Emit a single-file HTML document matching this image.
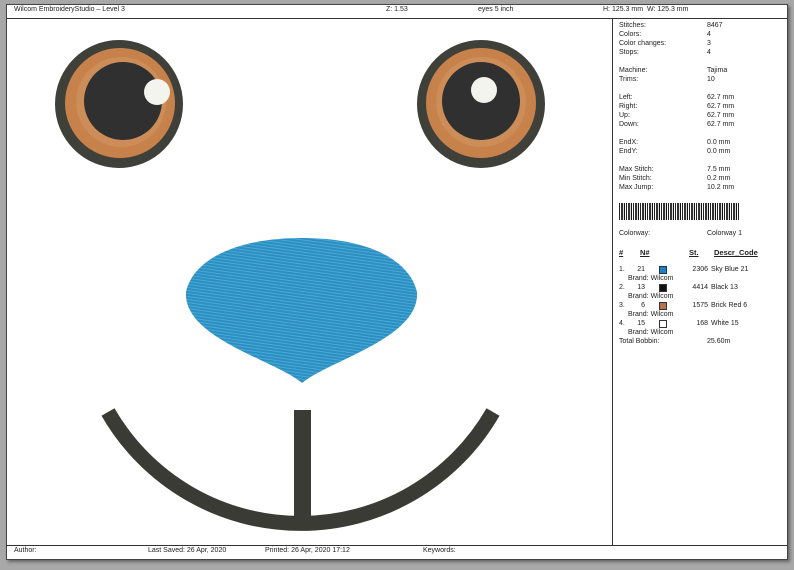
<!DOCTYPE html>
<html><head><meta charset="utf-8"><style>
*{margin:0;padding:0}
body{width:794px;height:570px;background:#a8a8a8;position:relative;overflow:hidden;font-family:"Liberation Sans",sans-serif;font-size:7px;color:#222}
.page{position:absolute;left:6px;top:4px;width:780px;height:554px;background:#fff;border:1px solid #444;box-shadow:2px 2px 3px #666}
.t{position:absolute;white-space:nowrap;line-height:8px}
.hl{position:absolute;background:#333}
.sw{position:absolute;left:659px;width:6px;height:6px;border:1px solid #333}
.r{text-align:right}
</style></head><body>
<div class="page"></div>
<div class="hl" style="left:6px;top:18px;width:781px;height:1px"></div>
<div class="hl" style="left:612px;top:18px;width:1px;height:527px"></div>
<div class="hl" style="left:6px;top:545px;width:781px;height:1px"></div>
<div class="t" style="left:14px;top:6px">Wilcom EmbroideryStudio – Level 3</div>
<div class="t" style="left:386px;top:6px">Z: 1.53</div>
<div class="t" style="left:478px;top:6px">eyes 5 inch</div>
<div class="t" style="left:603px;top:6px">H: 125.3 mm &nbsp;W: 125.3 mm</div>
<div class="t" style="left:14px;top:547px">Author:</div>
<div class="t" style="left:148px;top:547px">Last Saved: 26 Apr, 2020</div>
<div class="t" style="left:265px;top:547px">Printed: 26 Apr, 2020 17:12</div>
<div class="t" style="left:423px;top:547px">Keywords:</div>

<div class="t" style="left:619px;top:21px;line-height:9px">Stitches:<br>Colors:<br>Color changes:<br>Stops:<br><br>Machine:<br>Trims:<br><br>Left:<br>Right:<br>Up:<br>Down:<br><br>EndX:<br>EndY:<br><br>Max Stitch:<br>Min Stitch:<br>Max Jump:</div>
<div class="t" style="left:707px;top:21px;line-height:9px">8467<br>4<br>3<br>4<br><br>Tajima<br>10<br><br>62.7 mm<br>62.7 mm<br>62.7 mm<br>62.7 mm<br><br>0.0 mm<br>0.0 mm<br><br>7.5 mm<br>0.2 mm<br>10.2 mm</div>
<div style="position:absolute;left:619px;top:203px;width:121px;height:17px;background:repeating-linear-gradient(90deg,#222 0 1px,#fff 1px 2px,#333 2px 4px,#ddd 4px 5px,#111 5px 6px,#fff 6px 7px)"></div>
<div class="t" style="left:619px;top:230px">Colorway:</div>
<div class="t" style="left:707px;top:230px">Colorway 1</div>
<div class="t" style="left:619px;top:249px;font-weight:bold;text-decoration:underline;font-size:7.5px">#</div>
<div class="t" style="left:640px;top:249px;font-weight:bold;text-decoration:underline;font-size:7.5px">N#</div>
<div class="t" style="left:689px;top:249px;font-weight:bold;text-decoration:underline;font-size:7.5px">St.</div>
<div class="t" style="left:714px;top:249px;font-weight:bold;text-decoration:underline;font-size:7.5px">Descr_Code</div>

<div class="t" style="left:619px;top:266px">1.</div><div class="t r" style="left:628px;top:266px;width:17px">21</div><div class="sw" style="top:266px;background:#1a82c8"></div><div class="t r" style="left:680px;top:266px;width:28px">2306</div><div class="t" style="left:711px;top:266px">Sky Blue 21</div><div class="t" style="left:628px;top:275px">Brand: Wilcom</div>
<div class="t" style="left:619px;top:284px">2.</div><div class="t r" style="left:628px;top:284px;width:17px">13</div><div class="sw" style="top:284px;background:#111"></div><div class="t r" style="left:680px;top:284px;width:28px">4414</div><div class="t" style="left:711px;top:284px">Black 13</div><div class="t" style="left:628px;top:293px">Brand: Wilcom</div>
<div class="t" style="left:619px;top:302px">3.</div><div class="t r" style="left:628px;top:302px;width:17px">6</div><div class="sw" style="top:302px;background:#b87050"></div><div class="t r" style="left:680px;top:302px;width:28px">1575</div><div class="t" style="left:711px;top:302px">Brick Red 6</div><div class="t" style="left:628px;top:311px">Brand: Wilcom</div>
<div class="t" style="left:619px;top:320px">4.</div><div class="t r" style="left:628px;top:320px;width:17px">15</div><div class="sw" style="top:320px;background:#fff"></div><div class="t r" style="left:680px;top:320px;width:28px">168</div><div class="t" style="left:711px;top:320px">White 15</div><div class="t" style="left:628px;top:329px">Brand: Wilcom</div>
<div class="t" style="left:619px;top:338px">Total Bobbin:</div>
<div class="t" style="left:707px;top:338px">25.60m</div>

<svg style="position:absolute;left:0;top:0" width="794" height="570">
<defs><pattern id="st" width="6" height="3" patternUnits="userSpaceOnUse" patternTransform="rotate(8)"><rect width="6" height="3" fill="#2b8fc2"/><rect width="6" height="1" fill="#4aa8d6"/></pattern></defs>
<g>
<circle cx="119" cy="104" r="64" fill="#3f403a"/>
<circle cx="120" cy="103" r="55" fill="#c7824c"/>
<circle cx="121" cy="102" r="45" fill="#d49866" opacity=".5"/>
<circle cx="123" cy="101" r="39" fill="#303030"/>
<circle cx="157" cy="92" r="13" fill="#f4f4ee"/>
<circle cx="481" cy="104" r="64" fill="#3f403a"/>
<circle cx="481" cy="103" r="55" fill="#c7824c"/>
<circle cx="481" cy="102" r="45" fill="#d49866" opacity=".5"/>
<circle cx="481" cy="101" r="39" fill="#303030"/>
<circle cx="484" cy="90" r="13" fill="#f4f4ee"/>
</g>
<path d="M302,238 C372,238 410,262 417,292 C420,338 330,360 302,383 C275,360 183,338 186,292 C193,260 235,238 302,238 Z" fill="url(#st)"/>
<path d="M108,412 A222,222 0 0 0 493,412" fill="none" stroke="#3a3b34" stroke-width="15"/>
<rect x="294" y="410" width="17" height="112" fill="#3a3b34"/>
</svg>
</body></html>
